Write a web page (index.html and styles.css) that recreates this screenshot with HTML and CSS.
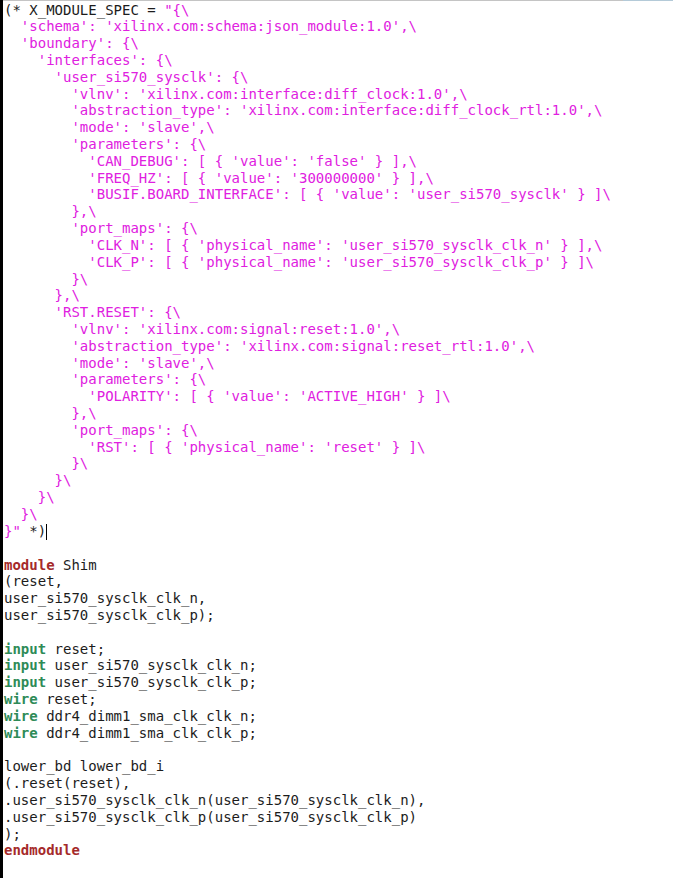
FILE: index.html
```html
<!DOCTYPE html>
<html>
<head>
<meta charset="utf-8">
<link rel="stylesheet" href="styles.css">
</head>
<body>
<div class="window">
  <div class="topline"><div class="topline-grey"></div><div class="topline-blue"></div></div>
  <pre class="code">(* X_MODULE_SPEC = <span class="str">"{\
  'schema': 'xilinx.com:schema:json_module:1.0',\
  'boundary': {\
    'interfaces': {\
      'user_si570_sysclk': {\
        'vlnv': 'xilinx.com:interface:diff_clock:1.0',\
        'abstraction_type': 'xilinx.com:interface:diff_clock_rtl:1.0',\
        'mode': 'slave',\
        'parameters': {\
          'CAN_DEBUG': [ { 'value': 'false' } ],\
          'FREQ_HZ': [ { 'value': '300000000' } ],\
          'BUSIF.BOARD_INTERFACE': [ { 'value': 'user_si570_sysclk' } ]\
        },\
        'port_maps': {\
          'CLK_N': [ { 'physical_name': 'user_si570_sysclk_clk_n' } ],\
          'CLK_P': [ { 'physical_name': 'user_si570_sysclk_clk_p' } ]\
        }\
      },\
      'RST.RESET': {\
        'vlnv': 'xilinx.com:signal:reset:1.0',\
        'abstraction_type': 'xilinx.com:signal:reset_rtl:1.0',\
        'mode': 'slave',\
        'parameters': {\
          'POLARITY': [ { 'value': 'ACTIVE_HIGH' } ]\
        },\
        'port_maps': {\
          'RST': [ { 'physical_name': 'reset' } ]\
        }\
      }\
    }\
  }\
}"</span> *)<span class="cursor"></span>

<span class="kw">module</span> Shim
(reset,
user_si570_sysclk_clk_n,
user_si570_sysclk_clk_p);

<span class="ty">input</span> reset;
<span class="ty">input</span> user_si570_sysclk_clk_n;
<span class="ty">input</span> user_si570_sysclk_clk_p;
<span class="ty">wire</span> reset;
<span class="ty">wire</span> ddr4_dimm1_sma_clk_clk_n;
<span class="ty">wire</span> ddr4_dimm1_sma_clk_clk_p;

lower_bd lower_bd_i
(.reset(reset),
.user_si570_sysclk_clk_n(user_si570_sysclk_clk_n),
.user_si570_sysclk_clk_p(user_si570_sysclk_clk_p)
);
<span class="kw">endmodule</span></pre>
</div>
</body>
</html>
```
FILE: styles.css
```css
html, body {
  margin: 0;
  padding: 0;
  background: #ffffff;
}

.window {
  height: 878px;
  border-left: 3px solid #000000;
  box-sizing: border-box;
  background: #ffffff;
  overflow: hidden;
}

.topline {
  display: flex;
  height: 1px;
}

.topline-grey {
  flex: 1;
  background: #c4c4c4;
}

.topline-blue {
  width: 50px;
  background: #b4cad8;
}

.code {
  margin: 0;
  padding: 0.5px 0 0 1px;
  font-family: "DejaVu Sans Mono", monospace;
  font-size: 14px;
  line-height: 16.82px;
  color: #1c1c1c;
  white-space: pre;
}

.str {
  color: #e020e0;
}

.kw {
  color: #a52a2a;
  font-weight: bold;
}

.ty {
  color: #2e8b57;
  font-weight: bold;
}

.cursor {
  display: inline-block;
  width: 0;
  height: 16px;
  border-left: 1px solid #000000;
  vertical-align: -4px;
}
```
